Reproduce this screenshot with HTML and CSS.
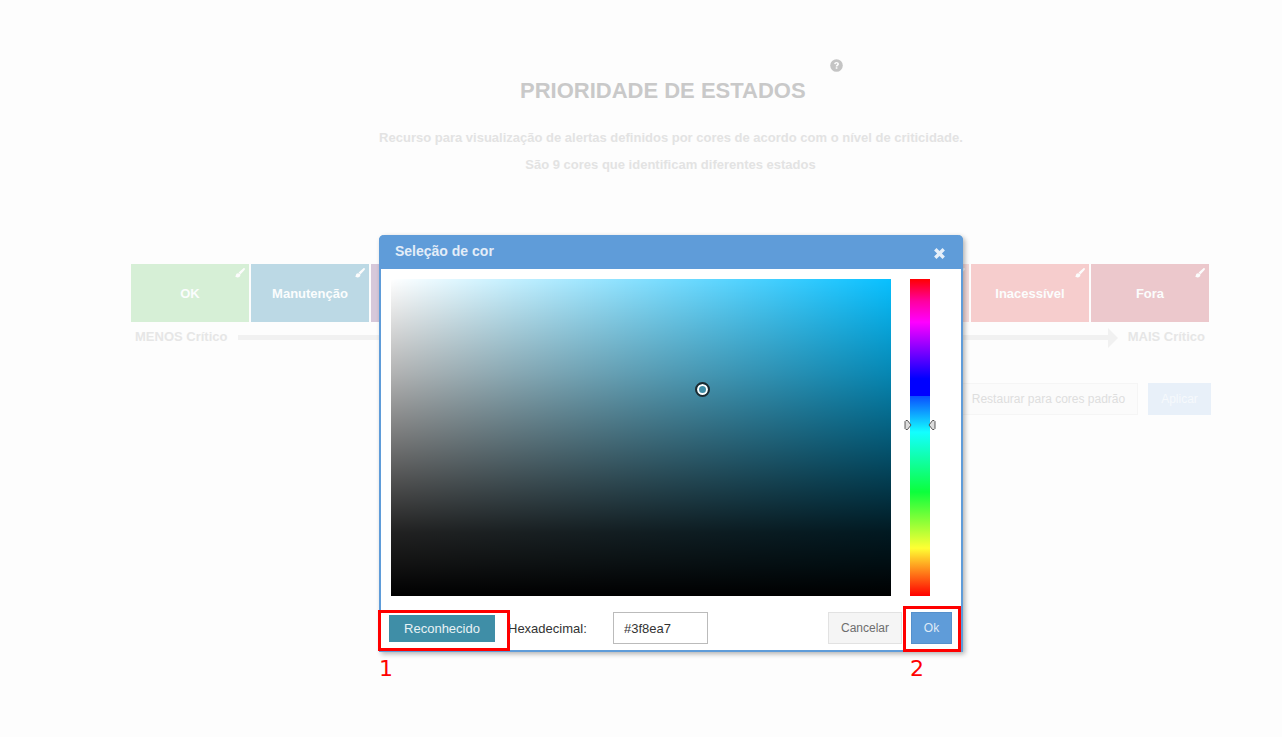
FILE: index.html
```html
<!DOCTYPE html>
<html lang="pt">
<head>
<meta charset="utf-8">
<title>Prioridade de estados</title>
<link rel="stylesheet" href="styles.css">
</head>
<body>
<svg class="defs" width="0" height="0"><defs>
<symbol id="brush" viewBox="0 0 10 10"><path d="M9.6.3c-.4-.4-1-.3-1.400.1L3.600 4.600 5.400 6.400 9.700 1.700c.4-.4.3-1-.1-1.400z"/><path d="M3 5.200C1.800 5.200 1 6 .9 7.200.8 8 .4 8.400 0 8.600c1 1 3.600 1.200 4.800 0 .8-.8.7-1.900 0-2.600-.5-.5-1.200-.8-1.800-.8z"/></symbol>
</defs></svg>
<main class="page">
  <header class="intro">
    <div class="title-wrap">
      <h1 class="title">PRIORIDADE DE ESTADOS</h1>
      <svg class="help" viewBox="0 0 12 12"><circle cx="6" cy="6" r="5.800"/><path class="help-mark" d="M3.800 4.700C3.900 3.400 4.800 2.700 6 2.700s2.300.8 2.300 1.900c0 1.400-1.500 1.400-1.500 2.400H5.300c0-1.700 1.400-1.700 1.400-2.400 0-.3-.3-.6-.7-.6-.4 0-.7.2-.8.8zM5.300 7.600h1.500v1.500H5.300z"/></svg>
    </div>
    <p class="lead">Recurso para visualização de alertas definidos por cores de acordo com o nível de criticidade.</p>
    <p class="lead lead-sub">São 9 cores que identificam diferentes estados</p>
  </header>

  <section class="states">
    <div class="state s-ok">OK<svg class="brush"><use href="#brush"/></svg></div>
    <div class="state s-man">Manutenção<svg class="brush"><use href="#brush"/></svg></div>
    <div class="state s-rec">Reconhecido<svg class="brush"><use href="#brush"/></svg></div>
    <div class="state s-rec">Desconhecido<svg class="brush"><use href="#brush"/></svg></div>
    <div class="state s-rec">Pendente<svg class="brush"><use href="#brush"/></svg></div>
    <div class="state s-rec">Alerta<svg class="brush"><use href="#brush"/></svg></div>
    <div class="state s-crit">Crítico<svg class="brush"><use href="#brush"/></svg></div>
    <div class="state s-ina">Inacessível<svg class="brush"><use href="#brush"/></svg></div>
    <div class="state s-out">Fora<svg class="brush"><use href="#brush"/></svg></div>
  </section>

  <div class="scale">
    <span class="scale-label">MENOS Crítico</span>
    <span class="scale-line"></span>
    <span class="scale-head"></span>
    <span class="scale-label">MAIS Crítico</span>
  </div>

  <div class="actions">
    <button class="btn-restore">Restaurar para cores padrão</button>
    <button class="btn-apply">Aplicar</button>
  </div>
</main>

<div class="dialog">
  <div class="dialog-head">
    <span class="dialog-title">Seleção de cor</span>
    <svg class="close" viewBox="0 0 12 12"><path d="M1 3.200 3.200 1 6 3.800 8.800 1 11 3.200 8.200 6 11 8.800 8.800 11 6 8.200 3.200 11 1 8.800 3.800 6z"/></svg>
  </div>
  <div class="picker">
    <div class="sv"><span class="sv-dot"></span></div>
    <div class="hue">
      <svg class="hue-mark hue-l" viewBox="0 0 7 10"><path d="M.5 1.500 1.500.5h1.500L6.500 5 3 9.500H1.500l-1-1z"/></svg>
      <svg class="hue-mark hue-r" viewBox="0 0 7 10"><path d="M6.500 1.500 5.500.5H4L.5 5 4 9.500h1.500l1-1z"/></svg>
    </div>
  </div>
  <div class="dialog-foot">
    <div class="swatch">Reconhecido</div>
    <label class="hex-label">Hexadecimal:</label>
    <input class="hex" value="#3f8ea7">
    <button class="btn-cancel">Cancelar</button>
    <button class="btn-ok">Ok</button>
  </div>
</div>

<div class="mark mark-1"></div>
<div class="mark mark-2"></div>
<span class="num num-1">1</span>
<span class="num num-2">2</span>
</body>
</html>
```
FILE: styles.css
```css
* { box-sizing: border-box; }
html, body { height: 100%; }
body {
  margin: 0;
  background: #fdfdfd;
  font-family: "Liberation Sans", Arial, sans-serif;
  overflow: hidden;
}
.defs { position: absolute; }
.page { width: 1282px; height: 737px; padding: 0 71px 0 131px; }

.intro { width: 1080px; padding-top: 78px; text-align: center; }
.title-wrap { position: relative; width: 302px; margin: 0 auto; }
.title {
  margin: 0;
  font-size: 22px;
  line-height: 25px;
  font-weight: 700;
  color: #c9c9c9;
  text-align: left;
}
.help { position: absolute; left: 310px; top: -19px; width: 13px; height: 13px; fill: #c4c4c4; }
.help-mark { fill: #fdfdfd; }
.lead {
  margin: 0;
  font-size: 13px;
  line-height: 27px;
  font-weight: 700;
  color: #e3e3e3;
}
.title-wrap + .lead { margin-top: 21px; }
.lead-sub { padding-right: 1px; }

.states { display: flex; gap: 2px; width: 1078px; margin-top: 86px; }
.state {
  position: relative;
  flex: 0 0 118px;
  height: 58px;
  display: flex;
  align-items: center;
  justify-content: center;
  font-size: 13px;
  font-weight: 700;
  color: #fbfdfd;
}
.brush { position: absolute; top: 4px; right: 4px; width: 10px; height: 10px; fill: #fcfcfc; }
.s-ok { background: #d6efd6; }
.s-man { background: #bcd9e5; }
.s-rec { background: #d6c8da; }
.s-crit { background: #f6dcdc; }
.s-ina { background: #f6cdcd; }
.s-out { background: #ecc8cc; }

.scale { display: flex; align-items: center; width: 1078px; height: 28px; padding: 0 4px; }
.scale-label { font-size: 13px; font-weight: 700; color: #e6e6e6; }
.scale-line { flex: 1; height: 5px; margin: 3px 0 0 11px; background: #f1f1f1; }
.scale-head {
  width: 0;
  height: 0;
  margin: 3px 10px 0 0;
  border-left: 10px solid #f1f1f1;
  border-top: 10px solid transparent;
  border-bottom: 10px solid transparent;
}

.actions { display: flex; justify-content: flex-end; gap: 10px; width: 1080px; margin-top: 33px; }
.btn-restore, .btn-apply {
  height: 32px;
  padding: 0;
  font-family: inherit;
  font-size: 12px;
}
.btn-restore { width: 179px; background: #fbfbfb; border: 1px solid #f5f5f5; color: #dedede; }
.btn-apply { width: 63px; background: #e8f0f9; border: 1px solid #e8f0f9; color: #f6f9fc; }

.dialog {
  position: absolute;
  left: 379px;
  top: 235px;
  width: 584px;
  height: 417px;
  display: flex;
  flex-direction: column;
  background: #fff;
  border: 2px solid #5f9cd9;
  border-top: 0;
  border-radius: 5px 5px 0 0;
  box-shadow: 2px 2px 5px rgba(0, 0, 0, .3);
}
.dialog-head {
  flex: 0 0 34px;
  display: flex;
  align-items: center;
  justify-content: space-between;
  margin: 0 -2px;
  padding: 0 17px 2px 16px;
  background: #5f9cd9;
  border-radius: 5px 5px 0 0;
}
.dialog-title { font-size: 14px; font-weight: 700; color: #e3edf8; }
.close { width: 13px; height: 13px; margin-top: 5px; fill: #e6eff9; }

.picker { display: flex; gap: 19px; padding: 10px 10px 0; }
.sv {
  position: relative;
  width: 500px;
  height: 317px;
  background:
    linear-gradient(to bottom, rgba(0, 0, 0, 0), rgba(0, 0, 0, .3) 30%, rgba(0, 0, 0, .55) 52%, rgba(0, 0, 0, .71) 66%, rgba(0, 0, 0, .87) 80%, rgba(0, 0, 0, .93) 90%, #000),
    linear-gradient(to right, #fff, rgba(255, 255, 255, 0)),
    #08c0ff;
}
.sv-dot {
  position: absolute;
  left: 304px;
  top: 103px;
  width: 15px;
  height: 15px;
  border-radius: 50%;
  background: #3f8ea7;
  border: 2px solid #1c2a30;
  box-shadow: inset 0 0 0 2px #fff;
}
.hue {
  position: relative;
  width: 20px;
  height: 317px;
  background: linear-gradient(to bottom, #f00, #ff00a0 7%, #f0f 13.6%, #00f 31.5%, #00f 36.9%, #0a50ff 37%, #13ffff 48.3%, #0cff3c 67.2%, #ff3 84.900%, #f00);
}
.hue-mark { position: absolute; top: 141px; width: 8px; height: 10px; fill: #ddd; stroke: #333; stroke-width: .8; }
.hue-l { left: -6px; }
.hue-r { right: -6px; }

.dialog-foot { flex: 1; display: flex; align-items: center; padding: 10px 9px 0 8px; }
.swatch {
  width: 106px;
  height: 27px;
  line-height: 27px;
  text-align: center;
  background: #3f8ea7;
  color: #e8f2f5;
  font-size: 13px;
}
.hex-label { margin-left: 13px; width: 105px; font-size: 13px; color: #333; }
.hex {
  width: 95px;
  height: 32px;
  padding: 0 10px;
  border: 1px solid #bbb;
  background: #fff;
  font-family: inherit;
  font-size: 13px;
  color: #333;
}
.btn-cancel, .btn-ok { height: 32px; padding: 0; font-family: inherit; font-size: 12px; }
.btn-cancel { width: 74px; margin-left: auto; background: #f5f5f5; border: 1px solid #e2e2e2; color: #6e6e6e; }
.btn-ok { width: 41px; margin-left: 9px; background: #5f9cd9; border: 1px solid #5590cc; color: #dfeaf6; }

.mark { position: absolute; border: 3px solid #f00; }
.mark-1 { left: 378px; top: 610px; width: 132px; height: 41px; }
.mark-2 { left: 903px; top: 606px; width: 58px; height: 46px; }
.num { position: absolute; top: 656px; font-family: "DejaVu Sans", sans-serif; font-size: 22px; line-height: 26px; color: #f00; }
.num-1 { left: 379px; }
.num-2 { left: 910px; }
```
